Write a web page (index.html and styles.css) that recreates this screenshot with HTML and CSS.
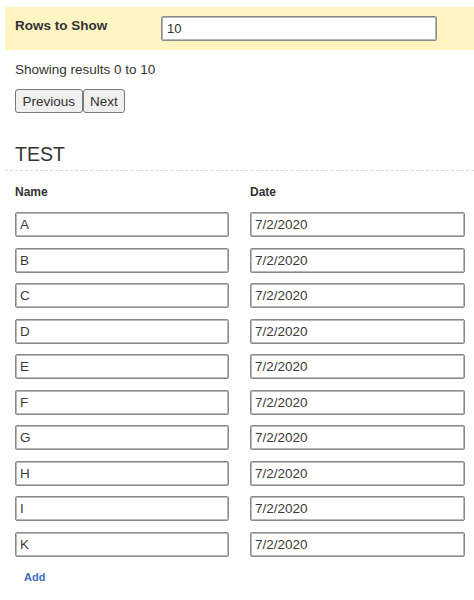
FILE: index.html
```html
<!DOCTYPE html>
<html>
<head>
<meta charset="utf-8">
<link rel="stylesheet" href="styles.css">
</head>
<body>
<div class="filter">
  <label class="filter-label">Rows to Show</label>
  <input class="filter-input" type="text" value="10">
</div>
<div class="pager">
  <p class="results">Showing results 0 to 10</p>
  <div class="buttons">
    <button class="btn">Previous</button><button class="btn">Next</button>
  </div>
</div>
<div class="section">
  <h2 class="section-title">TEST</h2>
  <div class="grid">
    <div class="col-head">Name</div><div class="col-head">Date</div>
    <input class="field" value="A"><input class="field" value="7/2/2020">
    <input class="field" value="B"><input class="field" value="7/2/2020">
    <input class="field" value="C"><input class="field" value="7/2/2020">
    <input class="field" value="D"><input class="field" value="7/2/2020">
    <input class="field" value="E"><input class="field" value="7/2/2020">
    <input class="field" value="F"><input class="field" value="7/2/2020">
    <input class="field" value="G"><input class="field" value="7/2/2020">
    <input class="field" value="H"><input class="field" value="7/2/2020">
    <input class="field" value="I"><input class="field" value="7/2/2020">
    <input class="field" value="K"><input class="field" value="7/2/2020">
  </div>
  <a class="add" href="#">Add</a>
</div>
</body>
</html>
```
FILE: styles.css
```css
* { box-sizing: border-box; }
body {
  margin: 0;
  font-family: "Liberation Sans", Arial, sans-serif;
  color: #333;
  background: #fff;
}
.filter {
  margin: 7px 0 0 5px;
  height: 43px;
  background: #fff5c2;
  display: flex;
  align-items: flex-start;
  padding: 9px 10px 0 10px;
}
.filter-label {
  width: 146px;
  font-size: 13.5px;
  font-weight: bold;
  line-height: 16px;
  padding-top: 2px;
  color: #333;
}
.filter-input {
  width: 276px;
  height: 25px;
  border: 1px solid #8a8a8a;
  border-radius: 2px;
  box-shadow: inset 0 0 0 1px #b5b5b5;
  padding: 0 5px;
  font-family: "Liberation Sans", Arial, sans-serif;
  font-size: 13px;
  color: #333;
  margin-top: 0;
}
.pager { padding-left: 15px; }
.results {
  margin: 12px 0 0 0;
  font-size: 13.5px;
  line-height: 16px;
  color: #333;
}
.buttons { margin-top: 11px; display: flex; }
.btn {
  height: 24px;
  padding: 0 6.5px;
  font-family: "Liberation Sans", Arial, sans-serif;
  font-size: 13.5px;
  color: #333;
  background: #efefef;
  border: 1px solid #7a7a7a;
  border-radius: 3px;
  margin: 0;
}
.section { margin: 30px 0 0 5px; }
.section-title {
  margin: 0;
  padding: 0 0 5px 10px;
  font-size: 19.5px;
  font-weight: normal;
  line-height: 22px;
  color: #333;
  border-bottom: 1px dashed #d8d8d8;
}
.grid {
  display: grid;
  grid-template-columns: 214px 215px;
  column-gap: 21px;
  row-gap: 10.5px;
  padding-left: 10px;
  margin-top: 14px;
}
.col-head {
  font-size: 12px;
  font-weight: bold;
  line-height: 14px;
  color: #333;
  margin-bottom: 2.5px;
}
.field {
  width: 100%;
  height: 25px;
  border: 1px solid #8a8a8a;
  border-radius: 2px;
  box-shadow: inset 0 0 0 1px #b8b8b8;
  padding: 0 4px;
  font-family: "Liberation Sans", Arial, sans-serif;
  font-size: 13.5px;
  color: #3a3a3a;
  background: #fff;
}
.add {
  display: inline-block;
  margin: 14px 0 0 19px;
  font-size: 11px;
  font-weight: bold;
  color: #3a6fbf;
  text-decoration: none;
}
```
